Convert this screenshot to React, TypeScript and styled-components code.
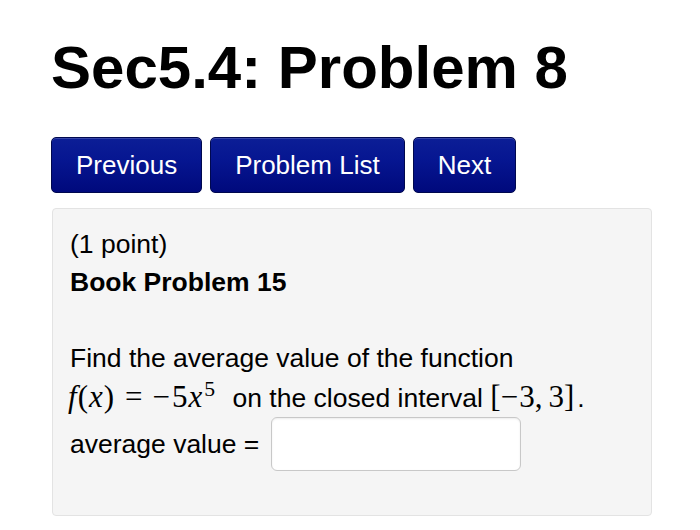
import React from "react";
import styled, { createGlobalStyle } from "styled-components";

const Global = createGlobalStyle`
  html, body { margin: 0; padding: 0; background: #ffffff; }
  body { font-family: "Liberation Sans", Arial, Helvetica, sans-serif; color: #000; }
`;

const Page = styled.div`
  padding: 35px 0 0 51px;
  width: 602px;
`;

const Title = styled.h1`
  margin: 0;
  font-size: 60px;
  line-height: 65px;
  font-weight: bold;
  color: #000;
`;

const Nav = styled.div`
  display: flex;
  gap: 8px;
  margin-top: 37px;
`;

const NavButton = styled.button`
  height: 56px;
  padding: 0 24px;
  border: 1px solid #00084f;
  border-radius: 5px;
  background: linear-gradient(to bottom, #0c1e96 0%, #061691 40%, #00097c 100%);
  box-shadow: inset 0 1px 0 rgba(255, 255, 255, 0.18);
  color: #ffffff;
  font-family: "Liberation Sans", Arial, Helvetica, sans-serif;
  font-size: 26px;
  display: flex;
  align-items: center;
`;

const Panel = styled.div`
  margin-top: 15px;
  margin-left: 1px;
  width: 600px;
  min-height: 308px;
  box-sizing: border-box;
  background: #f5f5f5;
  border: 1px solid #e3e3e3;
  border-radius: 4px;
  padding: 16px 17px 20px 17px;
  font-size: 26.5px;
  line-height: 38px;
`;

const Line = styled.div<{ $bold?: boolean; $gap?: number }>`
  font-weight: ${(p) => (p.$bold ? "bold" : "normal")};
  margin-top: ${(p) => p.$gap ?? 0}px;
`;

const Math = styled.span<{ $lead?: number; $trail?: number }>`
  font-family: "Liberation Serif", "Times New Roman", serif;
  font-size: 31px;
  line-height: 1;
  margin-left: ${(p) => p.$lead ?? 0}px;
  margin-right: ${(p) => p.$trail ?? 0}px;
`;

const Var = styled.i`
  font-style: italic;
  padding: 0 1px;
`;

const Op = styled.span<{ $left: number; $right: number }>`
  margin: 0 ${(p) => p.$right}px 0 ${(p) => p.$left}px;
`;

const Sup = styled.sup`
  font-size: 0.7em;
  line-height: 0;
  vertical-align: 0.5em;
  margin-left: 1px;
`;

const AnswerRow = styled.div`
  display: flex;
  align-items: center;
  gap: 12px;
  margin-top: 0;
`;

const AnswerInput = styled.input`
  width: 250px;
  height: 54px;
  box-sizing: border-box;
  border: 1px solid #c8c8c8;
  border-radius: 6px;
  background: #fff;
  box-shadow: inset 0 1px 2px rgba(0, 0, 0, 0.08);
  font-size: 24px;
  padding: 0 10px;
`;

export default function App() {
  return (
    <>
      <Global />
      <Page>
        <Title>Sec5.4: Problem 8</Title>
        <Nav>
          <NavButton>Previous</NavButton>
          <NavButton>Problem List</NavButton>
          <NavButton>Next</NavButton>
        </Nav>
        <Panel>
          <Line>(1 point)</Line>
          <Line $bold>Book Problem 15</Line>
          <Line $gap={38}>Find the average value of the function</Line>
          <Line $gap={2}>
            <Math $lead={-3} $trail={10}>
              <Var>f</Var>(<Var>x</Var>)<Op $left={11} $right={10}>=</Op>
              <Op $left={0} $right={2}>−</Op>5<Var>x</Var>
              <Sup>5</Sup>
            </Math>{" "}
            on the closed interval{" "}
            <Math $trail={3}>
              [<Op $left={0} $right={1}>−</Op>3,<Op $left={0} $right={6}></Op>3]
            </Math>
            .
          </Line>
          <AnswerRow>
            <span>average value =</span>
            <AnswerInput type="text" aria-label="average value" />
          </AnswerRow>
        </Panel>
      </Page>
    </>
  );
}
